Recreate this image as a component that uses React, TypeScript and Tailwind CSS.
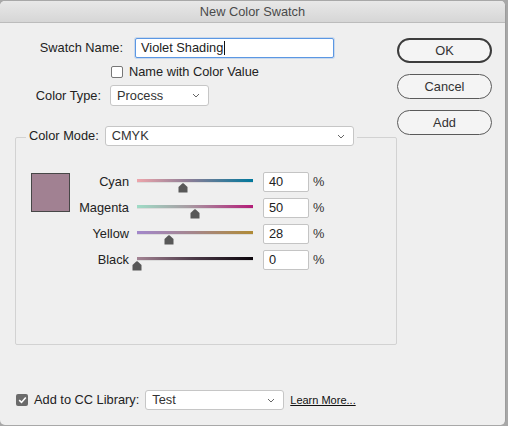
import React from 'react'

const font = { fontFamily: '"Liberation Sans", Arial, sans-serif' }

function Chevron() {
  return (
    <svg width="8" height="5" viewBox="0 0 8 5" className="shrink-0">
      <path d="M1 1 L4 4 L7 1" fill="none" stroke="#666" strokeWidth="1" />
    </svg>
  )
}

function Select({ value, className }: { value: string; className: string }) {
  return (
    <div
      className={`flex items-center justify-between rounded-[3px] border border-[#c6c6c6] bg-white pl-[6px] pr-[8px] text-[12.8px] text-[#333] ${className}`}
    >
      <span>{value}</span>
      <Chevron />
    </div>
  )
}

function Thumb() {
  return (
    <svg width="10" height="10" viewBox="0 0 10 10">
      <path d="M0.5 4 L4.2 0.6 Q5 0 5.8 0.6 L9.5 4 L9.5 9.5 L0.5 9.5 Z" fill="#585858" />
    </svg>
  )
}

type Channel = { name: string; value: number; gradient: string }

const channels: Channel[] = [
  { name: 'Cyan', value: 40, gradient: 'bg-[linear-gradient(to_right,#eea5ab,#8c7d96_45%,#00789c)]' },
  { name: 'Magenta', value: 50, gradient: 'bg-[linear-gradient(to_right,#9edcc6,#a89aa2_45%,#b31c78)]' },
  { name: 'Yellow', value: 28, gradient: 'bg-[linear-gradient(to_right,#a287cb,#a5868a_50%,#b08b36)]' },
  { name: 'Black', value: 0, gradient: 'bg-[linear-gradient(to_right,#a48494,#4a3846_50%,#0c060c)]' },
]

function SliderRow({ channel }: { channel: Channel }) {
  return (
    <div className="flex h-[20px] items-center">
      <div className="w-[59px] text-right text-[12.8px] text-[#222]">{channel.name}</div>
      <div className="relative ml-[8px] h-[20px] w-[116px]">
        <div className={`absolute left-0 right-0 top-[7px] h-[4px] border-b border-[#dcdcdc] ${channel.gradient}`} />
        <div className="absolute top-[11px]" style={{ left: `${(channel.value / 100) * 116 - 5}px` }}>
          <Thumb />
        </div>
      </div>
      <div className="ml-[10px] flex h-[20px] w-[46px] items-center rounded-[2px] border border-[#c4c4c4] bg-white pl-[5px] text-[12.8px] text-[#222]">
        {channel.value}
      </div>
      <div className="ml-[4px] text-[12.8px] text-[#333]">%</div>
    </div>
  )
}

function DialogButton({ label, primary }: { label: string; primary?: boolean }) {
  return (
    <div
      className={`flex h-[25px] w-[95px] items-center justify-center rounded-full bg-[#f4f4f4] text-[12.8px] text-[#333] ${
        primary ? 'border-2 border-[#3c3c3c]' : 'border border-[#5a5a5a]'
      }`}
    >
      {label}
    </div>
  )
}

export default function App() {
  return (
    <div className="h-[426px] w-[508px] overflow-hidden bg-[#a8a8a8] pt-[1px]" style={font}>
      <div className="flex h-[424px] w-[506px] flex-col overflow-hidden rounded-[5px] border-r border-[#9c9c9c] bg-[#efefef]">
        <div className="flex h-[22px] shrink-0 items-center justify-center border-b border-[#bcbcbc] bg-[linear-gradient(#e8e8e8,#d6d6d6)] text-[12.8px] text-[#4a4a4a]">
          New Color Swatch
        </div>

        <div className="flex pt-[15px]">
          <div className="w-[397px]">
            <div className="flex h-[20px] items-center">
              <div className="w-[123px] text-right text-[12.8px] text-[#222]">Swatch Name:</div>
              <div className="ml-[12px] flex h-[20px] w-[199px] items-center rounded-[2px] border border-[#5b97e3] bg-white pl-[5px] text-[12.8px] text-[#222] shadow-[0_0_0_1px_rgba(91,151,227,0.25)]">
                Violet Shading
                <span className="ml-[1px] h-[14px] w-[1px] bg-[#111]" />
              </div>
            </div>

            <div className="mt-[7px] flex h-[13px] items-center">
              <div className="ml-[111px] h-[12px] w-[12px] rounded-[2px] border border-[#777] bg-white" />
              <div className="ml-[6px] text-[12.8px] text-[#222]">Name with Color Value</div>
            </div>

            <div className="mt-[7px] flex h-[21px] items-center">
              <div className="w-[101px] text-right text-[12.8px] text-[#222]">Color Type:</div>
              <Select value="Process" className="ml-[9px] h-[21px] w-[99px]" />
            </div>

            <div className="ml-[15px] mt-[31px] h-[208px] w-[382px] rounded-[2px] border border-[#d2d2d2]">
              <div className="-mt-[12px] ml-[10px] flex h-[20px] w-fit items-center bg-[#efefef] px-[3px]">
                <div className="text-[12.8px] text-[#222]">Color Mode:</div>
                <Select value="CMYK" className="ml-[6px] h-[20px] w-[249px]" />
              </div>

              <div className="mt-[26px] flex">
                <div className="ml-[15px] mt-[1px] h-[39px] w-[39px] shrink-0 border border-[#474747] bg-[#a18192]" />
                <div className="flex flex-col gap-[6px]">
                  {channels.map((c) => (
                    <SliderRow key={c.name} channel={c} />
                  ))}
                </div>
              </div>
            </div>

            <div className="mt-[45px] flex h-[20px] items-center">
              <div className="ml-[16px] flex h-[12px] w-[12px] items-center justify-center rounded-[2px] bg-[#6b6b6b]">
                <svg width="9" height="8" viewBox="0 0 9 8">
                  <path d="M1.2 4.2 L3.5 6.4 L7.8 1.4" fill="none" stroke="#fff" strokeWidth="1.6" />
                </svg>
              </div>
              <div className="ml-[6px] text-[12.8px] text-[#222]">Add to CC Library:</div>
              <Select value="Test" className="ml-[6px] h-[20px] w-[139px]" />
              <div className="ml-[6px] text-[11px] font-medium text-[#111] underline">Learn More...</div>
            </div>
          </div>

          <div className="flex flex-col gap-[11px]">
            <DialogButton label="OK" primary />
            <DialogButton label="Cancel" />
            <DialogButton label="Add" />
          </div>
        </div>
      </div>
    </div>
  )
}
